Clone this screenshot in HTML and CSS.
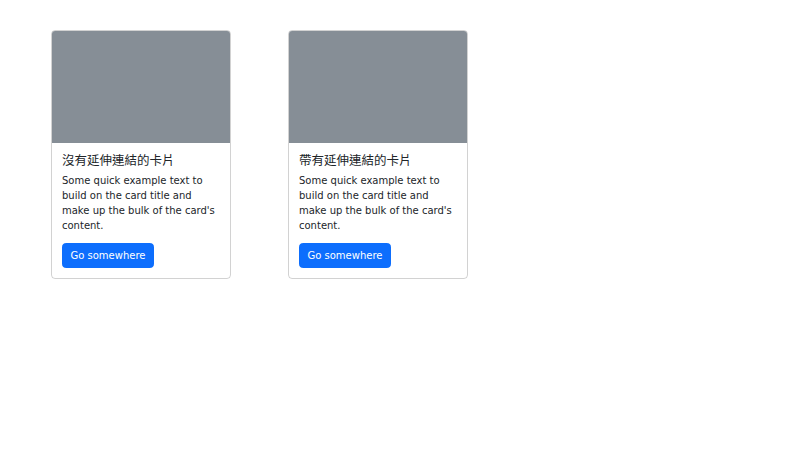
FILE: index.html
```html
<!DOCTYPE html>
<html>
<head>
  <meta charset="utf-8">
  <title>Cards</title>
  <link rel="stylesheet" href="styles.css">
</head>
<body>
  <div class="container">
    <div class="card">
      <div class="card-img"></div>
      <div class="card-body">
        <h5 class="card-title">沒有延伸連結的卡片</h5>
        <p class="card-text">Some quick example text to build on the card title and make up the bulk of the card's content.</p>
        <a href="#" class="btn">Go somewhere</a>
      </div>
    </div>

    <div class="card">
      <div class="card-img"></div>
      <div class="card-body">
        <h5 class="card-title">帶有延伸連結的卡片</h5>
        <p class="card-text">Some quick example text to build on the card title and make up the bulk of the card's content.</p>
        <a href="#" class="btn">Go somewhere</a>
      </div>
    </div>
  </div>
</body>
</html>
```

FILE: styles.css
```css
body {
  font-family: "DejaVu Sans", "Noto Sans CJK TC", sans-serif;
  font-size: 10px;
  line-height: 15px;
  color: #212529;
  margin: 0;
  padding: 0;
  background: #fff;
}

.container {
  display: flex;
  align-items: flex-start;
  gap: 57px;
  padding: 30px 0 0 51px;
}

.card {
  box-sizing: border-box;
  width: 180px;
  border: 1px solid rgba(0, 0, 0, 0.175);
  border-radius: 4px;
  overflow: hidden;
}

.card-img {
  height: 112px;
  background: #868e96;
}

.card-body {
  padding: 10px;
}

.card-title {
  font-size: 12.5px;
  font-weight: 400;
  line-height: 15px;
  margin: 0 0 5px;
}

.card-text {
  margin: 0 0 10px;
}

.btn {
  display: inline-block;
  padding: 3.75px 7.5px;
  border: 1px solid #0d6efd;
  border-radius: 3.75px;
  background: #0d6efd;
  color: #fff;
  text-decoration: none;
  line-height: 15px;
}
```
